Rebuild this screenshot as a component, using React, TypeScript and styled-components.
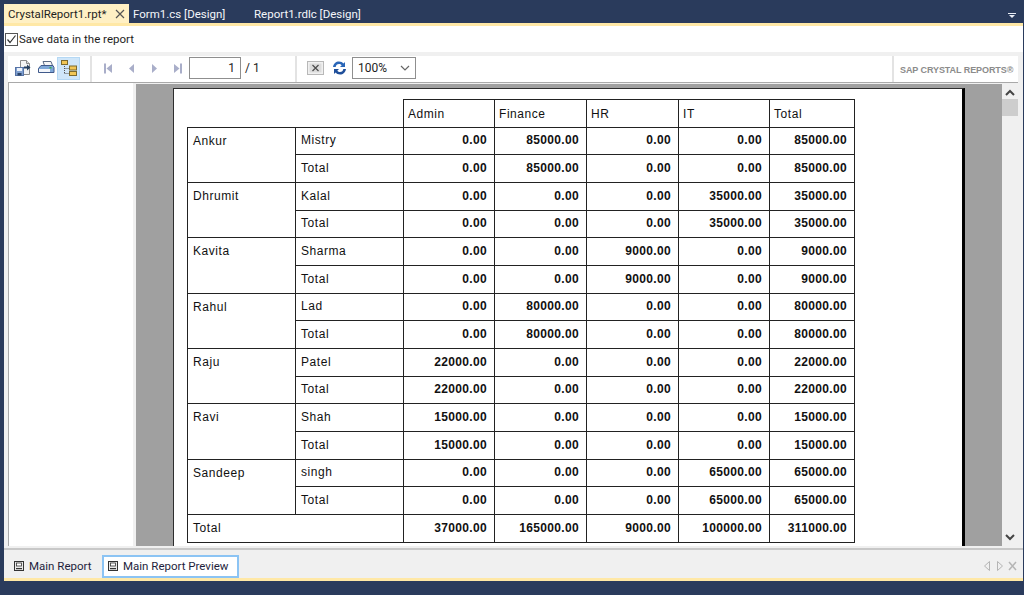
import React from "react";
import styled, { createGlobalStyle } from "styled-components";

const GlobalStyle = createGlobalStyle`
  html, body {
    margin: 0;
    padding: 0;
    background: #2a3b5c;
  }
`;

const Shell = styled.div`
  width: 1024px;
  height: 595px;
  overflow: hidden;
  display: flex;
  flex-direction: column;
  background: #2a3b5c;
  font-family: Roboto, "Open Sans", sans-serif;
  font-size: 11.5px;
  color: #1e1e1e;
`;

const TabStrip = styled.div`
  height: 23px;
  flex: none;
  padding: 4px 0 0 4px;
  box-sizing: border-box;
  display: flex;
  align-items: stretch;
  position: relative;
`;

const DocTab = styled.div<{ $active?: boolean; $w: number }>`
  width: ${(p) => p.$w}px;
  box-sizing: border-box;
  padding-left: 4px;
  display: flex;
  align-items: center;
  justify-content: space-between;
  white-space: nowrap;
  background: ${(p) => (p.$active ? "#fff0c4" : "transparent")};
  color: ${(p) => (p.$active ? "#1e1e1e" : "#f4f6fa")};
`;

const TabClose = styled.svg`
  width: 10px;
  height: 10px;
  margin-right: 4px;
`;

const TabMenu = styled.svg`
  position: absolute;
  right: 8px;
  top: 13px;
  width: 8px;
  height: 5px;
`;

const Frame = styled.div`
  flex: 1;
  margin: 0 1px 14px 4px;
  display: flex;
  flex-direction: column;
  background: #f0f0f0;
  border-top: 3px solid #ffe8a6;
  border-bottom: 3px solid #ffe8a6;
  min-height: 0;
`;

const SaveRow = styled.label`
  height: 26px;
  flex: none;
  background: #fff;
  display: flex;
  align-items: center;
  gap: 1px;
  padding-left: 1px;
`;

const CheckBox = styled.svg`
  width: 13px;
  height: 13px;
  box-sizing: border-box;
  background: #fff;
  border: 1px solid #555;
`;

const ToolBand = styled.div`
  height: 31px;
  flex: none;
  box-sizing: border-box;
  padding: 4px 5px 0 4px;
  background: #f0f0f0;
`;

const Toolbar = styled.div`
  height: 26px;
  background: #fff;
  border-bottom: 1px solid #a9a9a9;
  display: flex;
  align-items: stretch;
`;

const ToolGroup = styled.div<{ $w?: number }>`
  width: ${(p) => (p.$w ? `${p.$w}px` : "auto")};
  flex: ${(p) => (p.$w ? "none" : 1)};
  box-sizing: border-box;
  display: flex;
  align-items: center;
  padding-bottom: 2px;
  border-right: 2px solid #e3e3e3;
`;

const ToolBtn = styled.div<{ $active?: boolean; $ml?: number }>`
  width: 23px;
  height: 23px;
  margin-left: ${(p) => p.$ml ?? 0}px;
  flex: none;
  box-sizing: border-box;
  display: flex;
  align-items: center;
  justify-content: center;
  background: ${(p) => (p.$active ? "#cfe6f9" : "transparent")};
  border: 1px solid ${(p) => (p.$active ? "#b5d8f4" : "transparent")};
`;

const PageInput = styled.div`
  width: 52px;
  height: 22px;
  flex: none;
  box-sizing: border-box;
  border: 1px solid #8f8f8f;
  display: flex;
  align-items: center;
  justify-content: flex-end;
  padding-right: 5px;
  font-size: 12px;
`;

const PageTotal = styled.span`
  margin-left: 4px;
  font-size: 12px;
`;

const ZoomSelect = styled.div`
  width: 64px;
  height: 22px;
  flex: none;
  margin-left: 1px;
  box-sizing: border-box;
  border: 1px solid #8f8f8f;
  display: flex;
  align-items: center;
  justify-content: space-between;
  padding: 0 5px;
  font-size: 12px;
`;

const Brand = styled.div`
  width: 124px;
  flex: none;
  box-sizing: border-box;
  padding: 2px 0 0 6px;
  display: flex;
  align-items: center;
  white-space: nowrap;
  font-family: "Liberation Sans", Arial, sans-serif;
  font-size: 9px;
  letter-spacing: -0.08px;
  font-weight: 700;
  color: #8b8b8b;
`;

const Body = styled.div`
  flex: 1;
  min-height: 0;
  padding: 0 5px 2px 4px;
  display: flex;
  background: #f0f0f0;
  border-bottom: 2px solid #c8c8c8;
`;

const GroupTree = styled.div`
  width: 125px;
  flex: none;
  box-sizing: border-box;
  background: #fff;
  border-left: 1px solid #a9a9a9;
  margin-right: 3px;
`;

const Viewer = styled.div`
  flex: 1;
  min-width: 0;
  background: #a0a0a0;
  padding: 4px 0 0 37px;
  margin-top: 1px;
  overflow: hidden;
`;

const Sheet = styled.div`
  width: 792px;
  height: 100%;
  box-sizing: border-box;
  background: #fff;
  border-top: 1px solid #2e2e2e;
  border-left: 1px solid #2e2e2e;
  border-right: 3px solid #000;
  padding: 10px 0 0 13px;
  overflow: hidden;
`;

const Report = styled.table`
  table-layout: fixed;
  width: 667px;
  border-collapse: collapse;
  font-family: "Liberation Sans", Arial, sans-serif;
  font-size: 12px;
  letter-spacing: 0.55px;
  color: #111;
`;

const ReportCol = styled.col<{ $w: number }>`
  width: ${(p) => p.$w}px;
`;

const Row = styled.tr`
  height: 27.67px;
`;

const Cell = styled.td<{ $blank?: boolean }>`
  box-sizing: border-box;
  padding: 1px 0 0 4px;
  border: ${(p) => (p.$blank ? "none" : "1px solid #222")};
`;

const NameCell = styled(Cell)`
  vertical-align: top;
  padding: 6px 0 0 5px;
`;

const SurnameCell = styled(Cell)`
  padding: 0 0 1px 5px;
`;

const Amount = styled.td`
  box-sizing: border-box;
  padding: 0 7px 1px 0;
  border: 1px solid #222;
  text-align: right;
  font-weight: 700;
  letter-spacing: 0.35px;
`;

const Scrollbar = styled.div`
  width: 16px;
  flex: none;
  margin-top: 1px;
  background: #f0f0f0;
  display: flex;
  flex-direction: column;
  align-items: center;
  justify-content: space-between;
  padding: 5px 0;
  box-sizing: border-box;
  position: relative;
`;

const ScrollThumb = styled.div`
  position: absolute;
  top: 15px;
  left: 0;
  width: 16px;
  height: 17px;
  background: #cdcdcd;
`;

const BottomBar = styled.div`
  height: 28px;
  flex: none;
  box-sizing: border-box;
  display: flex;
  align-items: center;
  padding: 4px 4px 0 8px;
`;

const ViewTab = styled.div<{ $active?: boolean; $w: number }>`
  width: ${(p) => p.$w}px;
  height: 23px;
  box-sizing: border-box;
  display: flex;
  align-items: center;
  gap: 5px;
  padding-left: ${(p) => (p.$active ? 4 : 0)}px;
  white-space: nowrap;
  color: #1e1e3c;
  background: ${(p) => (p.$active ? "#fff" : "transparent")};
  border: 2px solid ${(p) => (p.$active ? "#8cc4f4" : "transparent")};
`;

const ViewTabs = styled.div`
  display: flex;
  gap: 8px;
  flex: 1;
`;

const ScrollArrows = styled.svg`
  width: 36px;
  height: 12px;
`;

const FormGlyph = styled.svg`
  width: 10px;
  height: 10px;
  flex: none;
`;

type Amounts = { a: string; f: string; h: string; i: string; t: string };
type Person = Amounts & { first: string; last: string };

const people: Person[] = [
  { first: "Ankur", last: "Mistry", a: "0.00", f: "85000.00", h: "0.00", i: "0.00", t: "85000.00" },
  { first: "Dhrumit", last: "Kalal", a: "0.00", f: "0.00", h: "0.00", i: "35000.00", t: "35000.00" },
  { first: "Kavita", last: "Sharma", a: "0.00", f: "0.00", h: "9000.00", i: "0.00", t: "9000.00" },
  { first: "Rahul", last: "Lad", a: "0.00", f: "80000.00", h: "0.00", i: "0.00", t: "80000.00" },
  { first: "Raju", last: "Patel", a: "22000.00", f: "0.00", h: "0.00", i: "0.00", t: "22000.00" },
  { first: "Ravi", last: "Shah", a: "15000.00", f: "0.00", h: "0.00", i: "0.00", t: "15000.00" },
  { first: "Sandeep", last: "singh", a: "0.00", f: "0.00", h: "0.00", i: "65000.00", t: "65000.00" },
];

const AmountCells = ({ l }: { l: Amounts }) => (
  <>
    <Amount>{l.a}</Amount>
    <Amount>{l.f}</Amount>
    <Amount>{l.h}</Amount>
    <Amount>{l.i}</Amount>
    <Amount>{l.t}</Amount>
  </>
);

const ExportIcon = () => (
  <svg width="18" height="18" viewBox="0 0 18 18">
    <path d="M6.500 1.500h6l3 3v11h-9z" fill="#f4f4f4" stroke="#8a8a8a" />
    <path d="M12.500 1.500v3h3" fill="#dcdcdc" stroke="#8a8a8a" />
    <path d="M10 7.500h3v-2l3.500 3-3.500 3v-2h-3z" fill="#26405f" />
    <rect x="1.500" y="8.500" width="8" height="8" fill="#7f9fcf" stroke="#5673a6" />
    <rect x="3" y="9" width="5" height="3" fill="#eef3fa" />
    <rect x="3.500" y="14" width="4" height="2.500" fill="#2c4468" />
  </svg>
);

const PrintIcon = () => (
  <svg width="18" height="18" viewBox="0 0 18 18">
    <path d="M6 2.500h8l1.500 4h-8z" fill="#f6f6f6" stroke="#5a6a84" />
    <path d="M4 6.500h12l1 2v5H1.500V9.500z" fill="#7ea7d8" stroke="#40598a" />
    <rect x="2" y="10" width="11" height="3" fill="#f3f6fb" />
    <rect x="12.500" y="8" width="2" height="1.500" fill="#38b04a" />
  </svg>
);

const TreeIcon = () => (
  <svg width="18" height="18" viewBox="0 0 18 18">
    <path d="M4.500 5v10M4.500 9.500h5M4.500 14.500h5" stroke="#555" fill="none" strokeDasharray="1 1" />
    <rect x="1.500" y="1.500" width="6" height="4" fill="#f2c655" stroke="#7d6a2c" />
    <rect x="9.500" y="7" width="7" height="4" fill="#f2c655" stroke="#7d6a2c" />
    <rect x="9.500" y="12.500" width="7" height="4" fill="#f2c655" stroke="#7d6a2c" />
  </svg>
);

const NavIcon = ({ d, bar }: { d: string; bar?: number }) => (
  <svg width="11" height="13" viewBox="0 0 11 13">
    {bar !== undefined && <rect x={bar} y="1.500" width="2" height="10" fill="#a9aec9" />}
    <path d={d} fill="#a9aec9" />
  </svg>
);

const StopIcon = () => (
  <svg width="17" height="16" viewBox="0 0 17 16">
    <rect x="0.500" y="1.500" width="16" height="13" fill="#f0f0f0" stroke="#b8b8b8" />
    <rect x="2.500" y="3.500" width="12" height="9" fill="#dcdcdc" />
    <path d="M5.500 5l6 6M11.500 5l-6 6" stroke="#4c4c4c" strokeWidth="1.200" />
  </svg>
);

const RefreshIcon = () => (
  <svg width="17" height="16" viewBox="0 0 17 16">
    <path d="M2 7c.5-3.500 3-5.500 6-5.500 2 0 3.500.8 4.500 2l1.500-1.500v5h-5l1.700-1.700C10 4.500 9 4 8 4 6 4 5 5.200 4.700 7z" fill="#2a66b8" />
    <path d="M15 9c-.5 3.500-3 5.500-6 5.500-2 0-3.500-.8-4.500-2L3 14V9h5l-1.700 1.700C7 11.500 8 12 9 12c2 0 3-1.200 3.300-3z" fill="#1f4f9a" />
  </svg>
);

const Chevron = ({ up, color, thin }: { up?: boolean; color: string; thin?: boolean }) => (
  <svg width="10" height="7" viewBox="0 0 10 7">
    <path d={up ? "M1 6l4-4 4 4" : "M1 1l4 4 4-4"} fill="none" stroke={color} strokeWidth={thin ? 1.2 : 2} />
  </svg>
);

const FormIcon = () => (
  <FormGlyph viewBox="0 0 10 10">
    <rect x="0.500" y="0.500" width="9" height="9" fill="#e8e8e8" stroke="#333" />
    <rect x="2.500" y="2" width="5" height="3" fill="#fff" stroke="#333" strokeWidth="0.800" />
    <rect x="2" y="7" width="6" height="1.200" fill="#333" />
  </FormGlyph>
);

export default function App() {
  return (
    <Shell>
      <GlobalStyle />
      <TabStrip>
        <DocTab $active $w={125}>
          CrystalReport1.rpt*
          <TabClose viewBox="0 0 10 10">
            <path d="M1 1l8 8M9 1l-8 8" stroke="#555" strokeWidth="1.200" />
          </TabClose>
        </DocTab>
        <DocTab $w={121}>Form1.cs [Design]</DocTab>
        <DocTab $w={130}>Report1.rdlc [Design]</DocTab>
        <TabMenu viewBox="0 0 8 5">
          <rect width="8" height="1" fill="#e8ecf4" />
          <path d="M1 2h6l-3 3z" fill="#e8ecf4" />
        </TabMenu>
      </TabStrip>

      <Frame>
        <SaveRow>
          <CheckBox viewBox="0 0 11 11">
            <path d="M1.500 5.500l2.500 3 5.500-7" fill="none" stroke="#333" strokeWidth="1.200" />
          </CheckBox>
          Save data in the report
        </SaveRow>

        <ToolBand>
          <Toolbar>
            <ToolGroup $w={84}>
              <ToolBtn $ml={3}><ExportIcon /></ToolBtn>
              <ToolBtn><PrintIcon /></ToolBtn>
              <ToolBtn $active><TreeIcon /></ToolBtn>
            </ToolGroup>
            <ToolGroup $w={205}>
              <ToolBtn $ml={5}><NavIcon d="M9 2v9L3.500 6.500z" bar={1} /></ToolBtn>
              <ToolBtn><NavIcon d="M8 2v9L3 6.500z" /></ToolBtn>
              <ToolBtn><NavIcon d="M3 2v9l5-4.500z" /></ToolBtn>
              <ToolBtn><NavIcon d="M2 2v9l5.500-4.500z" bar={8} /></ToolBtn>
              <PageInput>1</PageInput>
              <PageTotal>/ 1</PageTotal>
            </ToolGroup>
            <ToolGroup>
              <ToolBtn $ml={7}><StopIcon /></ToolBtn>
              <ToolBtn $ml={1}><RefreshIcon /></ToolBtn>
              <ZoomSelect>
                100%
                <Chevron color="#666" thin />
              </ZoomSelect>
            </ToolGroup>
            <Brand>SAP CRYSTAL REPORTS®</Brand>
          </Toolbar>
        </ToolBand>

        <Body>
          <GroupTree />
          <Viewer>
            <Sheet>
              <Report>
                <colgroup>
                  <ReportCol $w={108} />
                  <ReportCol $w={108} />
                  <ReportCol $w={91} />
                  <ReportCol $w={92} />
                  <ReportCol $w={92} />
                  <ReportCol $w={91} />
                  <ReportCol $w={85} />
                </colgroup>
                <tbody>
                  <Row>
                    <Cell $blank colSpan={2} />
                    <Cell>Admin</Cell>
                    <Cell>Finance</Cell>
                    <Cell>HR</Cell>
                    <Cell>IT</Cell>
                    <Cell>Total</Cell>
                  </Row>
                  {people.map((p) => (
                    <React.Fragment key={p.first}>
                      <Row>
                        <NameCell rowSpan={2}>{p.first}</NameCell>
                        <SurnameCell>{p.last}</SurnameCell>
                        <AmountCells l={p} />
                      </Row>
                      <Row>
                        <SurnameCell>Total</SurnameCell>
                        <AmountCells l={p} />
                      </Row>
                    </React.Fragment>
                  ))}
                  <Row>
                    <SurnameCell colSpan={2}>Total</SurnameCell>
                    <AmountCells l={{ a: "37000.00", f: "165000.00", h: "9000.00", i: "100000.00", t: "311000.00" }} />
                  </Row>
                </tbody>
              </Report>
            </Sheet>
          </Viewer>
          <Scrollbar>
            <Chevron up color="#444" />
            <ScrollThumb />
            <Chevron color="#444" />
          </Scrollbar>
        </Body>

        <BottomBar>
          <ViewTabs>
            <ViewTab $w={82}><FormIcon />Main Report</ViewTab>
            <ViewTab $active $w={137}><FormIcon />Main Report Preview</ViewTab>
          </ViewTabs>
          <ScrollArrows viewBox="0 0 36 12">
            <path d="M6.500 1.500v9L1.500 6z" fill="none" stroke="#b5b5b5" />
            <path d="M14.500 1.500v9l5-4.500z" fill="none" stroke="#b5b5b5" />
            <path d="M26 2l7 8M33 2l-7 8" stroke="#b5b5b5" strokeWidth="1.500" />
          </ScrollArrows>
        </BottomBar>
      </Frame>
    </Shell>
  );
}
